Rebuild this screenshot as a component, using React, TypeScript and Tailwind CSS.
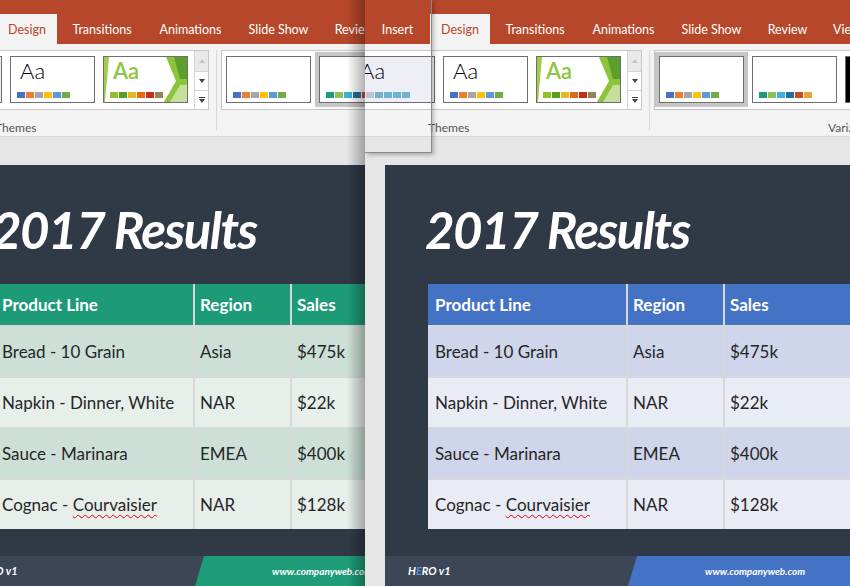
import clsx from 'clsx'

const tabs = [
  { name: 'Insert', w: 'w-[65px]' },
  { name: 'Design', w: 'w-[60px]', active: true },
  { name: 'Transitions', w: 'w-[90px]' },
  { name: 'Animations', w: 'w-[87px]' },
  { name: 'Slide Show', w: 'w-[89px]' },
  { name: 'Review', w: 'w-[63px]' },
  { name: 'View', w: 'w-[56px]' },
]

const office = ['bg-[#4472c4]', 'bg-[#ed7d31]', 'bg-[#a5a5a5]', 'bg-[#ffc000]', 'bg-[#5b9bd5]', 'bg-[#70ad47]']
const facet = ['bg-[#90c226]', 'bg-[#54a021]', 'bg-[#e6b91e]', 'bg-[#e76618]', 'bg-[#c42f1a]', 'bg-[#918655]']
const lavender = ['bg-[#a5442a]', 'bg-[#c2c2d2]', 'bg-[#6fb3cf]', 'bg-[#6fb3cf]', 'bg-[#6fb3cf]', 'bg-[#6fb3cf]']
const teal = ['bg-[#1e9a7c]', 'bg-[#8dc153]', 'bg-[#3fb0d0]', 'bg-[#1e6fa4]', 'bg-[#c0501e]', 'bg-[#e6a53c]']

const rows = [
  { product: 'Bread - 10 Grain', region: 'Asia', sales: '$475k' },
  { product: 'Napkin - Dinner, White', region: 'NAR', sales: '$22k' },
  { product: 'Sauce - Marinara', region: 'EMEA', sales: '$400k' },
  { product: 'Cognac - Courvaisier', region: 'NAR', sales: '$128k' },
]

const themes = {
  green: {
    header: 'bg-[#1d9b77]',
    rowA: 'bg-[#cde0d8]',
    rowB: 'bg-[#e7efeb]',
    accent: 'bg-[#1e9c78]',
    selected: 1,
  },
  blue: {
    header: 'bg-[#4472c4]',
    rowA: 'bg-[#cfd5ea]',
    rowB: 'bg-[#e9ebf5]',
    accent: 'bg-[#4472c4]',
    selected: 0,
  },
}

type Theme = (typeof themes)['green']

function Thumb({ colors, kind }: { colors?: string[]; kind: 'office' | 'facet' | 'lavender' | 'blank' | 'black' }) {
  return (
    <div
      className={clsx(
        'relative flex h-[47px] w-[85px] shrink-0 flex-col justify-between overflow-hidden border border-[#6e6e6e] px-[6px] pb-[4px] pt-px',
        kind === 'lavender' ? 'bg-[#eeeef6]' : kind === 'black' ? 'bg-black' : 'bg-white',
      )}
    >
      {kind === 'facet' && (
        <svg className="absolute inset-0" width="83" height="45" viewBox="0 0 83 45">
          <polygon points="0,0 5,0 1,45 0,45" fill="#9fcd4a" />
          <polygon points="62,0 83,0 83,45 60,45 72,24" fill="#8cc43c" />
          <polygon points="70,0 83,0 83,22 76,22" fill="#5aa02a" />
          <polygon points="66,45 83,45 83,28 76,28" fill="#c4e09a" />
        </svg>
      )}
      <div
        className={clsx(
          'relative ml-[3px] text-[22px] leading-[26px]',
          kind === 'facet' ? 'font-semibold text-[#8dc63f]' : 'font-light text-black',
          (kind === 'blank' || kind === 'black') && 'invisible',
        )}
      >
        Aa
      </div>
      <div className="relative flex gap-px">
        {colors?.map((c, i) => (
          <div key={i} className={clsx('h-[6px] w-[8px]', c)} />
        ))}
      </div>
    </div>
  )
}

function Ribbon({ selected }: { selected: number }) {
  const variants = [
    { kind: 'blank' as const, colors: office },
    { kind: 'blank' as const, colors: teal },
    { kind: 'black' as const, colors: [] },
  ]
  return (
    <div className="flex h-[93px] shrink-0 items-start border-b border-[#d5d5d5] bg-[#f3f3f3] pt-[6px] text-[#555]">
      {/* Themes */}
      <div className="ml-[-22px] flex shrink-0 flex-col">
        <div className="flex h-[60px] w-[299px] border border-[#c6c6c6] bg-white">
          <div className="flex gap-[8px] pl-[6px] pt-[5px]">
            <Thumb kind="lavender" colors={lavender} />
            <Thumb kind="office" colors={office} />
            <Thumb kind="facet" colors={facet} />
          </div>
          <div className="ml-auto flex w-[14px] flex-col border-l border-[#d5d5d5]">
            <div className="flex h-[20px] items-center justify-center bg-[#e9e9e9]">
              <svg width="6" height="4" viewBox="0 0 6 4"><polygon points="0,4 6,4 3,0" fill="#c4c4c4" /></svg>
            </div>
            <div className="flex h-[19px] items-center justify-center border-t border-[#d5d5d5]">
              <svg width="6" height="4" viewBox="0 0 6 4"><polygon points="0,0 6,0 3,4" fill="#444" /></svg>
            </div>
            <div className="flex h-[19px] flex-col items-center justify-center gap-px border-t border-[#d5d5d5]">
              <div className="h-px w-[6px] bg-[#444]" />
              <svg width="6" height="4" viewBox="0 0 6 4"><polygon points="0,0 6,0 3,4" fill="#444" /></svg>
            </div>
          </div>
        </div>
        <div className="mt-[10px] pl-[85px] text-[12px] leading-[16px]">Themes</div>
      </div>

      <div className="ml-[7px] h-[80px] w-px shrink-0 bg-[#d8d8d8]" />

      {/* Variants */}
      <div className="ml-[4px] flex shrink-0 flex-col">
        <div className="flex h-[60px] w-[250px] items-start border-y border-l border-[#c6c6c6] bg-white pt-px">
          {variants.map((v, i) => (
            <div key={i} className={clsx('p-[4px]', i === selected && 'bg-[#c6c6c6]')}>
              <Thumb kind={v.kind} colors={v.colors} />
            </div>
          ))}
        </div>
        <div className="mt-[10px] pl-[174px] text-[12px] leading-[16px]">Variants</div>
      </div>
    </div>
  )
}

function Slide({ t }: { t: Theme }) {
  return (
    <div className="flex flex-1 flex-col overflow-hidden bg-[#303a47]">
      <div className="h-[119px] shrink-0 pl-[40px] pt-[40px]">
        <div className="whitespace-nowrap text-[51px] font-bold italic leading-[50px] tracking-[-0.03em] text-white">
          2017 Results
        </div>
      </div>

      <div className="ml-[43px] grid w-[480px] shrink-0 grid-cols-[198px_95px_180px] gap-[2px] bg-white/80 text-[17px] text-[#262626]">
        {['Product Line', 'Region', 'Sales'].map((h, i) => (
          <div
            key={h}
            className={clsx('flex h-[41px] items-center pt-px font-bold text-white', i === 0 ? 'pl-[7px]' : 'pl-[5px]', t.header)}
          >
            {h}
          </div>
        ))}
        {rows.map((r, i) => {
          const bg = i % 2 === 0 ? t.rowA : t.rowB
          return [
            <div key={r.product} className={clsx('flex h-[49px] items-center whitespace-nowrap pl-[7px] pt-px', bg)}>
              {r.product === 'Cognac - Courvaisier' ? (
                <span>
                  Cognac -{' '}
                  <span className="underline decoration-red-600 decoration-wavy decoration-1 underline-offset-[3px]">
                    Courvaisier
                  </span>
                </span>
              ) : (
                r.product
              )}
            </div>,
            <div key={r.product + 'r'} className={clsx('flex h-[49px] items-center pl-[5px] pt-px', bg)}>
              {r.region}
            </div>,
            <div key={r.product + 's'} className={clsx('flex h-[49px] items-center pl-[5px] pt-px', bg)}>
              {r.sales}
            </div>,
          ]
        })}
      </div>

      {/* Footer */}
      <div className="mt-[27px] flex h-[30px] shrink-0 bg-[#3c4656] font-bold italic text-white">
        <div className="flex w-[243px] shrink-0 items-center pl-[23px] text-[11px]">
          H<span className="text-[#5b8fd6]">E</span>RO v1
        </div>
        <div
          className={clsx(
            'flex flex-1 items-center pl-[77px] text-[10px] [clip-path:polygon(9px_0,100%_0,100%_100%,0_100%)]',
            t.accent,
          )}
        >
          www.companyweb.com
        </div>
      </div>
    </div>
  )
}

function Window({ variant }: { variant: 'green' | 'blue' }) {
  const t = themes[variant]
  return (
    <div className="flex h-[586px] w-[485px] flex-col overflow-hidden bg-[#e6e6e6]">
      <div className="flex h-[44px] shrink-0 items-end bg-[#b7472a]">
        {tabs.map((tab) => (
          <div
            key={tab.name}
            className={clsx(
              'flex h-[30px] shrink-0 items-center justify-center pt-[2px] text-[12.5px]',
              tab.w,
              tab.active ? 'bg-[#f3f3f3] text-[#b7472a]' : 'text-white',
            )}
          >
            {tab.name}
          </div>
        ))}
      </div>
      <Ribbon selected={t.selected} />
      <div className="flex min-h-0 flex-1 pl-[20px] pt-[28px]">
        <Slide t={t} />
      </div>
    </div>
  )
}

export default function App() {
  return (
    <div className="relative flex h-[586px] w-[850px] overflow-hidden bg-[#e6e6e6] font-[family-name:Lato,sans-serif]">
      {/* back window, green theme */}
      <div className="relative w-[365px] shrink-0 overflow-hidden">
        <div className="ml-[-68px]">
          <Window variant="green" />
        </div>
        <div className="absolute inset-y-0 right-0 w-[18px] bg-gradient-to-r from-transparent to-black/30" />
      </div>

      {/* front window, blue theme */}
      <div className="relative w-[485px] shrink-0 overflow-hidden">
        <Window variant="blue" />
        <div className="absolute left-0 top-0 h-[153px] w-[67px] border-b border-r border-[#8a8a8a] shadow-[2px_2px_4px_rgba(0,0,0,0.25)]" />
      </div>
    </div>
  )
}
